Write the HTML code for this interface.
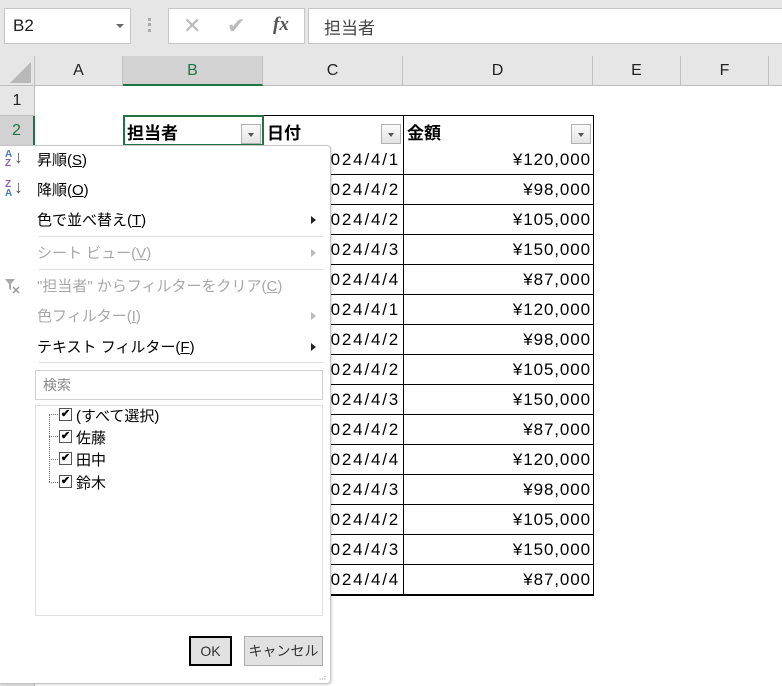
<!DOCTYPE html>
<html><head><meta charset="utf-8"><style>
*{margin:0;padding:0;box-sizing:border-box}
body{width:782px;height:685px;overflow:hidden;background:#fff;font-family:"Liberation Sans","Noto Sans CJK JP",sans-serif;position:relative;font-size:15px;color:#000}
.a{position:absolute}
.top{left:0;top:0;width:782px;height:56px;background:#e6e6e6}
.box{background:#fff;border:1px solid #c6c6c6}
.ch{top:56px;height:30px;background:#e6e6e6;border-right:1px solid #c0c0c0;border-bottom:1px solid #bdbdbd;text-align:center;line-height:30px;font-size:16px;color:#222}
.rh{left:0;width:35px;height:30px;background:#e6e6e6;border-bottom:1px solid #c0c0c0;border-right:1px solid #bdbdbd;text-align:center;line-height:30px;font-size:16px;color:#222}
.cell{height:30px;line-height:30px;font-size:17px;border-bottom:1px solid #000;text-align:right;padding-right:3px;color:#000;letter-spacing:0.9px}
.dt .cell{letter-spacing:1.8px;padding-right:3px}
.dd{width:20px;height:20px;border:1px solid #b0b0b0;background:linear-gradient(#fafafa,#e4e4e4)}
.dd:after{content:"";position:absolute;left:6px;top:8px;border:3px solid transparent;border-top:4px solid #555}
.mi{left:37px;font-size:15px;height:20px;line-height:20px}
.g{color:#a8a8a8}
.arr{left:311px;width:0;height:0;border-left:5px solid #222;border-top:4px solid transparent;border-bottom:4px solid transparent}
.arr.g{border-left-color:#bbb}
.sep{left:39px;width:284px;height:1px;background:#e0e0e0}
.cb{width:13px;height:13px;border:1px solid #555;background:#fff;font-size:11px;line-height:11px;text-align:center;font-weight:bold}
</style></head><body>
<div class="a top"></div>
<div class="a box" style="left:4px;top:8px;width:127px;height:36px"><span class="a" style="left:8px;top:7px;font-size:17px;color:#222">B2</span><span class="a" style="right:6px;top:15px;border:4px solid transparent;border-top:4px solid #666"></span></div>
<div class="a" style="left:148px;top:18px;width:3px;height:14px;border-left:3px dotted #aaa"></div>
<div class="a box" style="left:168px;top:8px;width:137px;height:36px">
<span class="a" style="left:14px;top:4px;font-size:22px;color:#bbb">✕</span>
<span class="a" style="left:58px;top:4px;font-size:22px;color:#bbb">✔</span>
<span class="a" style="left:104px;top:5px;font-size:19px;font-style:italic;font-weight:bold;font-family:'Liberation Serif',serif;color:#555">fx</span></div>
<div class="a box" style="left:308px;top:8px;width:480px;height:36px"><span class="a" style="left:15px;top:5px;font-size:17px;color:#444">担当者</span></div>
<div class="a" style="left:0;top:56px;width:35px;height:30px;background:#e6e6e6;border-right:1px solid #bdbdbd;border-bottom:1px solid #bdbdbd"><span class="a" style="left:10px;top:6px;border-left:21px solid transparent;border-bottom:21px solid #b8b8b8"></span></div>
<div class="a ch" style="left:35px;width:88px">A</div>
<div class="a ch" style="left:123px;width:140px;background:#d2d2d2;color:#217346;border-bottom:2px solid #217346">B</div>
<div class="a ch" style="left:263px;width:140px">C</div>
<div class="a ch" style="left:403px;width:190px">D</div>
<div class="a ch" style="left:593px;width:88px">E</div>
<div class="a ch" style="left:681px;width:88px">F</div>
<div class="a ch" style="left:769px;width:20px"></div>
<div class="a rh" style="top:86px">1</div>
<div class="a rh" style="top:116px;background:#d2d2d2;color:#217346;border-right:2px solid #217346">2</div>
<div class="a rh" style="top:146px;height:540px;border-bottom:none"></div>
<div class="a" style="left:123px;top:115px;width:471px;height:481px;border:1px solid #000"></div>
<div class="a" style="left:263px;top:115px;width:1px;height:481px;background:#000"></div>
<div class="a" style="left:403px;top:115px;width:1px;height:481px;background:#000"></div>
<div class="a" style="left:123px;top:115px;width:141px;height:31px;border:2px solid #217346"></div>
<div class="a" style="left:127px;top:119px;font-size:17px;font-weight:bold">担当者</div>
<div class="a dd" style="left:241px;top:124px"></div>
<div class="a" style="left:267px;top:119px;font-size:17px;font-weight:bold">日付</div>
<div class="a dd" style="left:381px;top:124px"></div>
<div class="a" style="left:407px;top:119px;font-size:17px;font-weight:bold">金額</div>
<div class="a dd" style="left:571px;top:124px"></div>
<div class="a" style="left:263px;top:145px;width:331px">
<div style="display:flex"><div class="dt" style="width:140px">
<div class="cell">2024/4/1</div><div class="cell">2024/4/2</div><div class="cell">2024/4/2</div><div class="cell">2024/4/3</div><div class="cell">2024/4/4</div><div class="cell">2024/4/1</div><div class="cell">2024/4/2</div><div class="cell">2024/4/2</div><div class="cell">2024/4/3</div><div class="cell">2024/4/2</div><div class="cell">2024/4/4</div><div class="cell">2024/4/3</div><div class="cell">2024/4/2</div><div class="cell">2024/4/3</div><div class="cell">2024/4/4</div>
</div><div style="width:191px;border-left:1px solid #000">
<div class="cell">¥120,000</div><div class="cell">¥98,000</div><div class="cell">¥105,000</div><div class="cell">¥150,000</div><div class="cell">¥87,000</div><div class="cell">¥120,000</div><div class="cell">¥98,000</div><div class="cell">¥105,000</div><div class="cell">¥150,000</div><div class="cell">¥87,000</div><div class="cell">¥120,000</div><div class="cell">¥98,000</div><div class="cell">¥105,000</div><div class="cell">¥150,000</div><div class="cell">¥87,000</div>
</div></div></div>
<div class="a" style="left:0;top:145px;width:331px;height:539px;background:#fff;border:1px solid #c6c6c6;border-left:none;border-radius:0 4px 4px 0;box-shadow:1px 1px 2px rgba(0,0,0,.15)">
<div class="a" style="left:5px;top:4px;font-size:10px;line-height:9px;font-weight:bold;color:#4a7bbf">A<br><span style="color:#8e5fb5">Z</span></div><div class="a" style="left:14px;top:1px;font-size:18px;color:#555">↓</div>
<div class="a" style="left:5px;top:34px;font-size:10px;line-height:9px;font-weight:bold;color:#8e5fb5">Z<br><span style="color:#4a7bbf">A</span></div><div class="a" style="left:14px;top:31px;font-size:18px;color:#555">↓</div>
<div class="a mi" style="top:5px">昇順(<u>S</u>)</div>
<div class="a mi" style="top:35px">降順(<u>O</u>)</div>
<div class="a mi" style="top:65px">色で並べ替え(<u>T</u>)</div><div class="a arr" style="top:70px"></div>
<div class="a sep" style="top:90px"></div>
<div class="a mi g" style="top:98px">シート ビュー(<u>V</u>)</div><div class="a arr g" style="top:103px"></div>
<div class="a sep" style="top:123px"></div>
<svg class="a" style="left:4px;top:131px" width="18" height="18" viewBox="0 0 18 18"><path d="M1 2h10l-4 5v6l-2-1V7z" fill="#aaa"/><path d="M9 10l6 6M15 10l-6 6" stroke="#999" stroke-width="1.5"/></svg>
<div class="a mi g" style="top:131px">"担当者" からフィルターをクリア(<u>C</u>)</div>
<div class="a mi g" style="top:161px">色フィルター(<u>I</u>)</div><div class="a arr g" style="top:166px"></div>
<div class="a mi" style="top:192px">テキスト フィルター(<u>F</u>)</div><div class="a arr" style="top:197px"></div>
<div class="a sep" style="top:216px"></div>
<div class="a" style="left:35px;top:224px;width:288px;height:30px;border:1px solid #d0d0d0;color:#888;font-size:14px;line-height:28px;padding-left:7px">検索</div>
<div class="a" style="left:35px;top:259px;width:288px;height:211px;border:1px solid #e0e0e0">
<div class="a" style="left:13px;top:8px;width:1px;height:68px;border-left:1px dotted #777"></div>
<div class="a" style="left:13px;top:8px;width:9px;border-top:1px dotted #777"></div>
<div class="a" style="left:13px;top:30px;width:9px;border-top:1px dotted #777"></div>
<div class="a" style="left:13px;top:53px;width:9px;border-top:1px dotted #777"></div>
<div class="a" style="left:13px;top:76px;width:9px;border-top:1px dotted #777"></div>
<div class="a cb" style="left:23px;top:2px">✔</div><div class="a" style="left:40px;top:-1px;font-size:15px">(すべて選択)</div>
<div class="a cb" style="left:23px;top:24px">✔</div><div class="a" style="left:40px;top:21px;font-size:15px">佐藤</div>
<div class="a cb" style="left:23px;top:46px">✔</div><div class="a" style="left:40px;top:43px;font-size:15px">田中</div>
<div class="a cb" style="left:23px;top:69px">✔</div><div class="a" style="left:40px;top:66px;font-size:15px">鈴木</div>
</div>
<div class="a" style="left:189px;top:490px;width:43px;height:30px;border:2px solid #000;background:#e1e1e1;text-align:center;line-height:26px;font-size:14px;color:#333">OK</div>
<div class="a" style="left:244px;top:490px;width:79px;height:30px;border:1px solid #adadad;background:#e1e1e1;text-align:center;line-height:28px;font-size:14px;color:#333">キャンセル</div>
<div class="a" style="left:316px;top:527px;font-size:8px;color:#aaa;letter-spacing:-1px">⠠⠴</div>
</div>
</body></html>
